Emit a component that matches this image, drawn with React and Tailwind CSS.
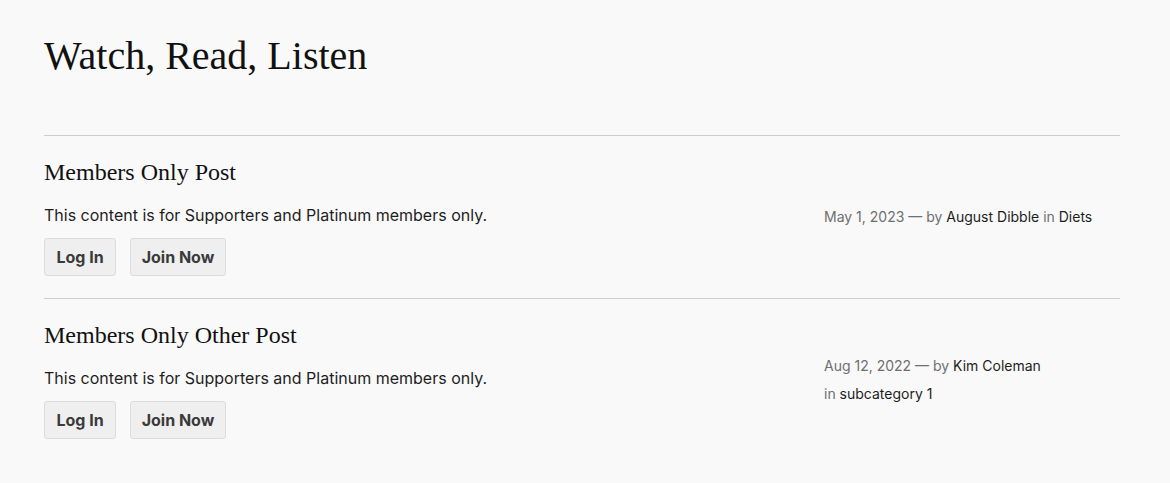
import React from "react";

const serif = { fontFamily: '"Liberation Serif", "Times New Roman", serif' };

function Buttons() {
  return (
    <div className="flex gap-[14px]">
      <button className="h-[38px] w-[72px] rounded-[3px] border border-[#dcdcdc] bg-[#efefef] text-[16px] font-bold text-[#3a3a3a]">
        Log In
      </button>
      <button className="h-[38px] w-[96px] rounded-[3px] border border-[#dcdcdc] bg-[#efefef] text-[16px] font-bold text-[#3a3a3a]">
        Join Now
      </button>
    </div>
  );
}

function Post({ title, meta }) {
  return (
    <div className="flex items-center border-t border-[#cccccc]">
      <div className="flex-1 pt-[20px] pb-[22px]">
        <h2 className="text-[24px] leading-[32px] text-[#111]" style={serif}>
          {title}
        </h2>
        <p className="mt-[15px] text-[16px] leading-[24px] text-[#1e1e1e]">
          This content is for Supporters and Platinum members only.
        </p>
        <div className="mt-[11px]">
          <Buttons />
        </div>
      </div>
      <div className="w-[296px] text-[14px] leading-[28px] text-[#6f6f6f]">{meta}</div>
    </div>
  );
}

export default function App() {
  return (
    <div
      className="min-h-[483px] bg-[#f9f9f9] px-[44px] pt-[30px]"
      style={{ fontFamily: 'Inter, "Liberation Sans", sans-serif' }}
    >
      <h1 className="text-[40px] leading-[52px] text-[#111]" style={serif}>
        Watch, Read, Listen
      </h1>
      <div className="mt-[53px] w-[1076px]">
        <Post
          title="Members Only Post"
          meta={
            <div>
              May 1, 2023 — by <span className="text-[#1e1e1e]">August Dibble</span> in{" "}
              <span className="text-[#1e1e1e]">Diets</span>
            </div>
          }
        />
        <Post
          title="Members Only Other Post"
          meta={
            <div>
              <div>
                Aug 12, 2022 — by <span className="text-[#1e1e1e]">Kim Coleman</span>
              </div>
              <div>
                in <span className="text-[#1e1e1e]">subcategory 1</span>
              </div>
            </div>
          }
        />
      </div>
    </div>
  );
}
